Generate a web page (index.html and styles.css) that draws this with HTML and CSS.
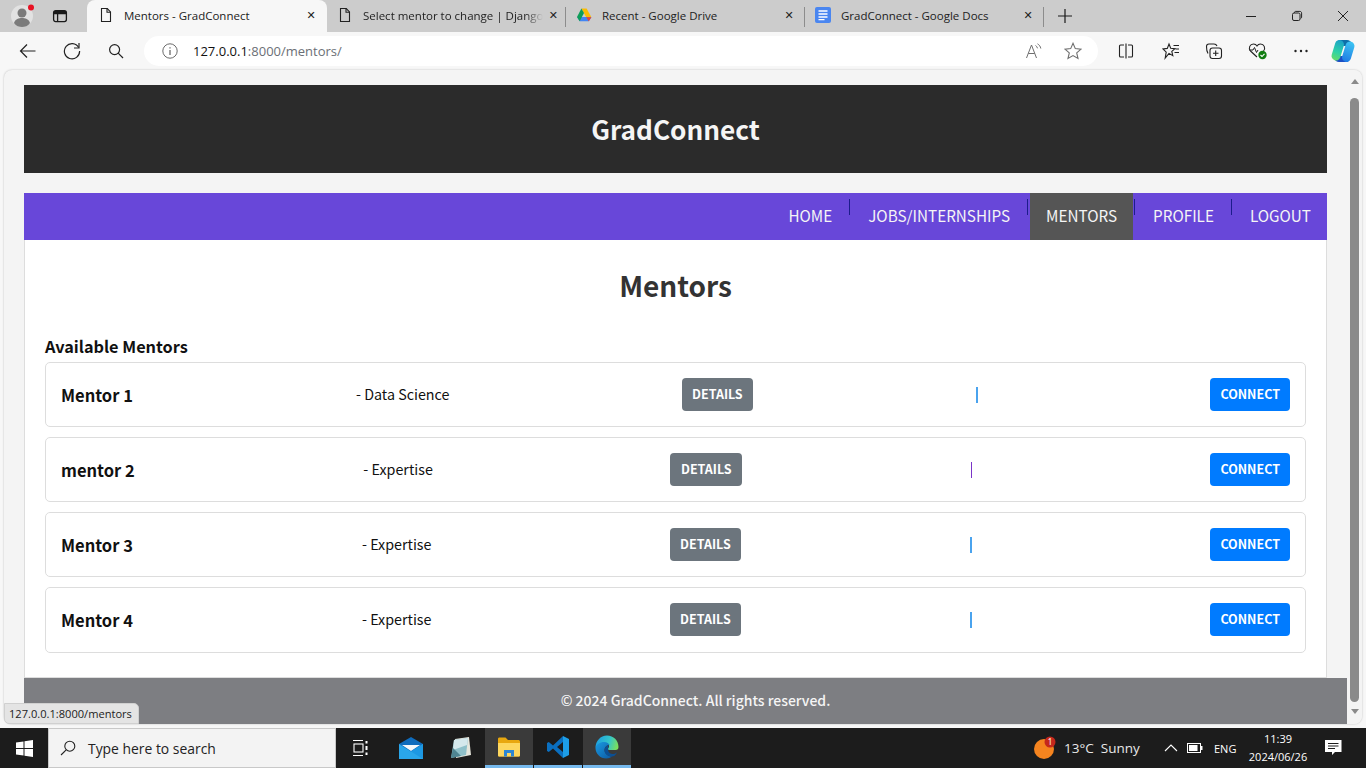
FILE: index.html
```html
<!DOCTYPE html>
<html lang="en">
  <head>
    <meta charset="UTF-8" />
    <title>Mentors - GradConnect</title>
    <link rel="stylesheet" href="styles.css">
  </head>
  <body>
    <div class="tabstrip">
      <div class="tab-tool profile-btn">
        <svg width="24" height="24" viewBox="0 0 24 24"><circle cx="11" cy="12" r="11" fill="#e2e2e2"/><circle cx="11" cy="9" r="4.5" fill="#7b7b7b"/><path d="M3 19c1-4 5-5 8-5s7 1 8 5c-2 3-5 4-8 4s-6-1-8-4z" fill="#7b7b7b"/><circle cx="20" cy="3.5" r="3" fill="#e81123"/></svg>
      </div>
      <div class="tab-tool sidebar-btn">
        <svg width="16" height="16" viewBox="0 0 16 16" fill="none" stroke="#1a1a1a" stroke-width="1.3"><rect x="1.6" y="2.6" width="12.8" height="11" rx="2"/><path d="M1.6 5.6h12.8M5.6 5.6v8" /><path d="M2 3h12v2.4H2z" fill="#1a1a1a" stroke="none"/></svg>
      </div>
      <div class="tab tab-active">
        <svg class="tab-icon" width="16" height="16" viewBox="0 0 16 16" fill="none" stroke="#222" stroke-width="1.1"><path d="M3.5 1.5h5.8l3.2 3.4v9.6h-9z"/><path d="M9 1.5v3.8h3.5"/></svg>
        <span class="tab-title">Mentors - GradConnect</span>
        <span class="tab-close">&#10005;</span>
      </div>
      <div class="tab">
        <svg class="tab-icon" width="16" height="16" viewBox="0 0 16 16" fill="none" stroke="#222" stroke-width="1.1"><path d="M3.5 1.5h5.8l3.2 3.4v9.6h-9z"/><path d="M9 1.5v3.8h3.5"/></svg>
        <span class="tab-title tab-fade">Select mentor to change | Django</span>
        <span class="tab-close">&#10005;</span>
      </div>
      <div class="tab">
        <svg class="tab-icon" width="16" height="16" viewBox="0 0 16 16"><path d="M5.4 1.5h5.200l4.800 8.700h-5.200z" fill="#fbbc04"/><path d="M3.700 14.200 1 10h14.400l-2.600 4.200z" fill="#4285f4"/><path d="M5.400 1.500 8 6 3.700 14.200 1 10z" fill="#0f9d58"/><path d="M10.200 10.200h5.200l-2.600 4z" fill="#ea4335"/></svg>
        <span class="tab-title">Recent - Google Drive</span>
        <span class="tab-close">&#10005;</span>
      </div>
      <div class="tab tab-last">
        <svg class="tab-icon" width="16" height="16" viewBox="0 0 16 16"><rect width="16" height="16" rx="2" fill="#4a86f0"/><path d="M3.500 4h9M3.500 7h9M3.500 10h9M3.500 12.600h6" stroke="#fff" stroke-width="1.400"/></svg>
        <span class="tab-title">GradConnect - Google Docs</span>
        <span class="tab-close">&#10005;</span>
      </div>
      <div class="new-tab">
        <svg width="16" height="16" viewBox="0 0 16 16" stroke="#1a1a1a" stroke-width="1.200"><path d="M8 1v14M1 8h14"/></svg>
      </div>
      <div class="window-btns">
        <svg width="12" height="12" viewBox="0 0 12 12" stroke="#222" fill="none"><path d="M1 6.500h10"/></svg>
        <svg width="12" height="12" viewBox="0 0 12 12" stroke="#222" fill="none"><rect x="1.500" y="3" width="7.500" height="7.500" rx="1.500"/><path d="M3.500 3V2.400c0-.6.500-1 1-1h4.400c1 0 1.700.7 1.700 1.700v4.200c0 .6-.4 1-1 1"/></svg>
        <svg width="12" height="12" viewBox="0 0 12 12" stroke="#222" fill="none"><path d="M1 1l10 10M11 1L1 11"/></svg>
      </div>
    </div>

    <div class="toolbar">
      <svg class="tool-back" width="18" height="18" viewBox="0 0 18 18" fill="none" stroke="#222" stroke-width="1.200"><path d="M16.500 9H1.500M8 2.500 1.500 9 8 15.500"/></svg>
      <svg class="tool-reload" width="18" height="18" viewBox="0 0 18 18" fill="none" stroke="#222" stroke-width="1.200"><path d="M15.600 5.500A7.600 7.600 0 1 0 16.600 9"/><path d="M16 1v5h-5"/></svg>
      <svg class="tool-search" width="16" height="16" viewBox="0 0 16 16" fill="none" stroke="#222" stroke-width="1.200"><circle cx="6.600" cy="6.600" r="5"/><path d="M10.200 10.200 15 15"/></svg>
      <div class="addressbar">
        <svg width="16" height="16" viewBox="0 0 16 16" fill="none" stroke="#6b6b6b"><circle cx="8" cy="8" r="7.200"/><path d="M8 7v5M8 4.200v1.400" stroke-width="1.300"/></svg>
        <span class="url"><span class="url-host">127.0.0.1</span>:8000/mentors/</span>
        <svg class="read-aloud" width="16" height="16" viewBox="0 0 16 16" fill="none" stroke="#6f6f6f" stroke-width="1"><path d="M.5 15 5.500 2 10.500 15M2.300 10.500h6.400"/><path d="M9.500 2.500c1 .6 1.700 1.500 2 2.800M11.500.8c1.700 1 3 2.700 3.300 4.700"/></svg>
        <svg class="fav-star" width="18" height="18" viewBox="0 0 18 18" fill="none" stroke="#6f6f6f" stroke-width="1.100"><path d="M9 1.300 11.300 6.600l5.700.5-4.300 3.800 1.300 5.600L9 13.600l-5 2.900 1.300-5.600L1 7.100l5.700-.5z"/></svg>
      </div>
      <div class="toolbar-icons">
        <svg width="16" height="16" viewBox="0 0 16 16" fill="none" stroke="#222" stroke-width="1.100"><path d="M6 2H2.500c-.6 0-1 .4-1 1v10c0 .6.400 1 1 1H6M10 2h3.500c.6 0 1 .4 1 1v10c0 .6-.4 1-1 1H10M8 .5v15"/></svg>
        <svg width="18" height="18" viewBox="0 0 18 18" fill="none" stroke="#222" stroke-width="1.100"><path d="M7 2 8.700 6.200l4.300.4-3.200 2.800 1 4.300L7 11.400 3.200 16l1-5.900L1 7l4.300-.6z"/><path d="M11.500 3.500H17M13.500 7H17M12.500 10.500H17"/></svg>
        <svg width="18" height="18" viewBox="0 0 18 18" fill="none" stroke="#222" stroke-width="1.100"><path d="M3 11.500C2 10 1.500 7 1.500 4.500 1.500 3 2.500 2 4 2h5c1.500 0 2.500.8 3 2"/><rect x="5" y="6" width="11.500" height="10.500" rx="2.500"/><path d="M10.700 8.500v5.500M8 11.200h5.500"/></svg>
        <svg width="20" height="18" viewBox="0 0 20 18"><path d="M9 15 2.500 9C0 6 2 2 5.500 2 7 2 8.300 2.800 9 4c.7-1.200 2-2 3.500-2C16 2 18 6 15.500 9" fill="none" stroke="#222" stroke-width="1.100"/><path d="M1 8h4l1.500-2.500 2 5L10 8" fill="none" stroke="#222"/><circle cx="14.500" cy="13" r="4.200" fill="#107c10"/><path d="M12.500 13l1.500 1.500 2.500-2.700" stroke="#fff" fill="none" stroke-width="1.100"/></svg>
        <svg width="16" height="16" viewBox="0 0 16 16" fill="#222"><circle cx="2.500" cy="8" r="1.200"/><circle cx="8" cy="8" r="1.200"/><circle cx="13.500" cy="8" r="1.200"/></svg>
        <svg class="copilot" width="26" height="26" viewBox="0 0 26 26">
          <defs>
            <linearGradient id="copilotA" gradientUnits="userSpaceOnUse" x1="11" y1="2" x2="4" y2="22"><stop offset="0" stop-color="#1a9fc9"/><stop offset="0.600" stop-color="#2ed2a6"/><stop offset="1" stop-color="#66dc6a"/></linearGradient>
            <linearGradient id="copilotB" gradientUnits="userSpaceOnUse" x1="22" y1="5" x2="14" y2="24"><stop offset="0" stop-color="#3cc2f2"/><stop offset="1" stop-color="#1e78e4"/></linearGradient>
          </defs>
          <path d="M8 2h9c2.500 0 4 1.500 4.500 3.500L22 8H13z" fill="#0f6fa8"/>
          <path d="M18 24H9c-2.500 0-4-1.500-4.500-3.500L4 18h9z" fill="#1b4fc4"/>
          <path d="M9.500 6.500 6 18" stroke="url(#copilotA)" stroke-width="9" stroke-linecap="round" fill="none"/>
          <path d="M20 8 16.500 19.500" stroke="url(#copilotB)" stroke-width="9" stroke-linecap="round" fill="none"/>
        </svg>
      </div>
    </div>

    <div class="viewport-wrap">
      <div class="viewport">
        <div class="page">
          <header class="site-header">
            <h1>GradConnect</h1>
          </header>
          <nav class="site-nav">
            <a href="#" class="nav-link">HOME</a>
            <span class="nav-sep"></span>
            <a href="#" class="nav-link">JOBS/INTERNSHIPS</a>
            <span class="nav-sep"></span>
            <a href="#" class="nav-link active">MENTORS</a>
            <span class="nav-sep"></span>
            <a href="#" class="nav-link">PROFILE</a>
            <span class="nav-sep"></span>
            <a href="#" class="nav-link">LOGOUT</a>
          </nav>
          <main class="content">
            <h2>Mentors</h2>
            <h3>Available Mentors</h3>
            <div class="mentor-row">
              <strong class="mentor-name">Mentor 1</strong>
              <span class="mentor-field">- Data Science</span>
              <a href="#" class="btn btn-details">DETAILS</a>
              <span class="mentor-sep sep-fresh"></span>
              <a href="#" class="btn btn-connect">CONNECT</a>
            </div>
            <div class="mentor-row">
              <strong class="mentor-name">mentor 2</strong>
              <span class="mentor-field">- Expertise</span>
              <a href="#" class="btn btn-details">DETAILS</a>
              <span class="mentor-sep sep-visited"></span>
              <a href="#" class="btn btn-connect">CONNECT</a>
            </div>
            <div class="mentor-row">
              <strong class="mentor-name">Mentor 3</strong>
              <span class="mentor-field">- Expertise</span>
              <a href="#" class="btn btn-details">DETAILS</a>
              <span class="mentor-sep sep-fresh"></span>
              <a href="#" class="btn btn-connect">CONNECT</a>
            </div>
            <div class="mentor-row">
              <strong class="mentor-name">Mentor 4</strong>
              <span class="mentor-field">- Expertise</span>
              <a href="#" class="btn btn-details">DETAILS</a>
              <span class="mentor-sep sep-fresh"></span>
              <a href="#" class="btn btn-connect">CONNECT</a>
            </div>
          </main>
          <footer class="site-footer">&copy; 2024 GradConnect. All rights reserved.</footer>
        </div>
        <div class="scrollbar">
          <span class="scroll-up"></span>
          <span class="scroll-thumb"></span>
          <span class="scroll-down"></span>
        </div>
      </div>
      <div class="status-tip">127.0.0.1:8000/mentors</div>
    </div>

    <div class="taskbar">
      <div class="start-btn">
        <svg width="17" height="17" viewBox="0 0 17 17" fill="#fff"><path d="M0 2.500 7.500 1.400v6.500H0zM8.500 1.300 17 0v7.900H8.500zM0 9h7.500v6.500L0 14.500zM8.500 9H17v8l-8.500-1.200z"/></svg>
      </div>
      <div class="task-search">
        <svg width="16" height="16" viewBox="0 0 16 16" fill="none" stroke="#222" stroke-width="1.100"><circle cx="9.800" cy="6.200" r="5"/><path d="M6.200 9.800 1 15"/></svg>
        <span>Type here to search</span>
      </div>
      <div class="task-icon task-view">
        <svg width="18" height="18" viewBox="0 0 18 18" fill="none" stroke="#fff" stroke-width="1.100"><path d="M1 1.500h10M1 16.500h10"/><rect x="2" y="5" width="9" height="8"/><path d="M14.500 2v2.500M14.500 7v4M14.500 13.500V16" stroke-width="2"/></svg>
      </div>
      <div class="task-icon">
        <svg width="24" height="22" viewBox="0 0 24 22"><path d="M0 7 12 0l12 7v15H0z" fill="#0f6cbd"/><path d="M3 8h18l-9 6z" fill="#f4f8fb"/><path d="M0 7l12 7.500L24 7v15H0z" fill="#2aa6ea"/><path d="M12 14.500 24 7v15z" fill="#1590de" opacity="0.600"/></svg>
      </div>
      <div class="task-icon">
        <svg width="22" height="22" viewBox="0 0 22 22"><path d="M6 2 20 0l2 18-15 3z" fill="#e6e6dc"/><path d="M5 3 19 1l-2 17-15 3z" fill="#8fc0c9"/><path d="M5 3 19 1l-1 7L4 13z" fill="#d5e8ec"/><path d="M2 21 4 11l8 8z" fill="#4f8592"/></svg>
      </div>
      <div class="task-icon task-open task-hover">
        <svg width="22" height="20" viewBox="0 0 22 20"><path d="M0 2c0-1 .6-1.500 1.500-1.500h6L10 3h10.500c.8 0 1.500.6 1.500 1.500V18c0 1-.7 1.500-1.500 1.500h-19C.6 19.500 0 19 0 18z" fill="#e8a70f"/><path d="M0 6h22v12c0 1-.7 1.500-1.500 1.500h-19C.6 19.500 0 19 0 18z" fill="#fdd75f"/><path d="M6 19.500V13h10v6.500h-3V16H9v3.500z" fill="#2c86d4"/></svg>
      </div>
      <div class="task-icon task-open">
        <svg width="24" height="24" viewBox="0 0 24 24"><path d="M17 1 7 10.500 2.800 7 1 8v8l1.800 1L7 13.500 17 23v-6l-6-5 6-5z" fill="#0a6fc0"/><path d="M17 1l6 3v16l-6 3z" fill="#1d9ee8"/></svg>
      </div>
      <div class="task-icon task-open task-hover">
        <svg width="24" height="24" viewBox="0 0 24 24">
          <defs>
            <linearGradient id="edgeA" x1="0" y1="0.300" x2="1" y2="0.500"><stop offset="0" stop-color="#1b9de2"/><stop offset="0.600" stop-color="#35c6c8"/><stop offset="1" stop-color="#7be05c"/></linearGradient>
            <linearGradient id="edgeB" x1="0" y1="0" x2="1" y2="1"><stop offset="0" stop-color="#1a9ae0"/><stop offset="1" stop-color="#0c59a4"/></linearGradient>
          </defs>
          <path d="M12 .5C18.500.5 23.500 5.500 23.500 12c0 2-1 3-3 3h-6c-1.500 0-2-1-1-2 1.500-2 0-5-3-5C5 8 1 11 .5 13 .5 6 5.500.5 12 .5z" fill="url(#edgeA)"/>
          <path d="M.5 13C1 9.500 5 7 9 7c3 0 5 1.500 5.500 3-2.500 0-5 2-5 5 0 4 4 6.500 7.500 6.500-1.500 1.300-3.500 2-5.500 2C5 23.500.5 18.500.5 13z" fill="url(#edgeB)"/>
          <path d="M13 14.500c0 2.500 2 4.500 5 4.500 1.500 0 3-.5 4-2-1 3-3 4.500-5 4.500-4 0-7.500-2.500-7.500-6.500 0-2.500 2-4.500 4-5-.5 1.300-.5 3-.5 4.500z" fill="#0b4f95"/>
        </svg>
      </div>
      <div class="tray">
        <svg class="weather-icon" width="24" height="24" viewBox="0 0 24 24"><circle cx="10" cy="13" r="10" fill="#f5841f"/><circle cx="16" cy="6" r="5.500" fill="#c4281c"/><text x="16" y="9" font-size="8" fill="#fff" text-anchor="middle" font-family="Noto Sans">1</text></svg>
        <span class="weather-text">13°C&nbsp;&nbsp;Sunny</span>
        <svg class="tray-chevron" width="14" height="10" viewBox="0 0 14 10" fill="none" stroke="#fff" stroke-width="1.100"><path d="M1 8l6-6 6 6"/></svg>
        <svg class="tray-battery" width="16" height="10" viewBox="0 0 16 10"><rect x=".5" y=".5" width="13" height="9" fill="none" stroke="#fff"/><rect x="2" y="2" width="8.500" height="6" fill="#fff"/><rect x="14" y="3" width="1.500" height="4" fill="#fff"/></svg>
        <span class="tray-lang">ENG</span>
        <div class="tray-clock">
          <span>11:39</span>
          <span>2024/06/26</span>
        </div>
        <svg class="tray-notify" width="17" height="16" viewBox="0 0 17 16"><path d="M0 0h16.500v12H10l-3 3v-3H0z" fill="#fff"/><path d="M3 3.500h10.500M3 6h10.500M3 8.500h7" stroke="#1e1e1e"/></svg>
      </div>
    </div>
  </body>
</html>
```

FILE: styles.css
```css
* {
  box-sizing: border-box;
}
html,
body {
  margin: 0;
  height: 768px;
  overflow: hidden;
}
body {
  display: flex;
  flex-direction: column;
  width: 1366px;
  font-family: "Open Sans", "Noto Sans", sans-serif;
  background-color: #f7f7f7;
}

/* browser tabs */
.tabstrip {
  display: flex;
  align-items: flex-end;
  height: 32px;
  background-color: #cccccc;
}
.tab-tool {
  display: flex;
  justify-content: center;
  align-items: center;
  height: 32px;
}
.profile-btn {
  width: 44px;
  padding-left: 2px;
}
.sidebar-btn {
  width: 32px;
  margin-right: 11px;
}
.tab {
  display: flex;
  align-items: center;
  width: 239px;
  height: 32px;
  padding: 0 10px 2px 10px;
  font-size: 11.5px;
  color: #222;
  position: relative;
}
.tab:not(.tab-active)::after {
  content: "";
  position: absolute;
  right: 0;
  top: 7px;
  height: 20px;
  width: 1px;
  background-color: #8c8c8c;
}
.tab-active {
  width: 240px;
  padding-left: 11px;
  background-color: #f7f7f7;
  border-radius: 8px 8px 0 0;
}
.tab-icon {
  flex: none;
  margin-right: 10px;
}
.tab-title {
  flex: 1;
  white-space: nowrap;
}
.tab-fade {
  -webkit-mask-image: linear-gradient(to right, #000 90%, transparent 100%);
  mask-image: linear-gradient(to right, #000 90%, transparent 100%);
}
.tab-close {
  flex: none;
  width: 12px;
  margin-left: 4px;
  font-size: 11px;
  text-align: center;
  font-family: "DejaVu Sans", sans-serif;
}
.new-tab {
  display: flex;
  justify-content: center;
  align-items: center;
  width: 42px;
  height: 32px;
}
.window-btns {
  display: flex;
  align-items: center;
  justify-content: flex-end;
  gap: 34px;
  flex: 1;
  height: 32px;
  padding-right: 17px;
}

/* browser toolbar */
.toolbar {
  display: flex;
  align-items: center;
  height: 38px;
  padding-left: 19px;
  background-color: #f7f7f7;
}
.tool-back {
  margin-right: 26px;
}
.tool-reload {
  margin-right: 27px;
}
.tool-search {
  margin-right: 20px;
}
.addressbar {
  display: flex;
  align-items: center;
  width: 954px;
  height: 30px;
  padding: 0 16px 0 18px;
  background-color: #fff;
  border-radius: 15px;
}
.url {
  flex: 1;
  margin-left: 15px;
  font-size: 13px;
  color: #6b6f76;
}
.url-host {
  color: #111;
}
.read-aloud {
  margin-right: 22px;
}
.toolbar-icons {
  display: flex;
  align-items: center;
  flex: 1;
  gap: 26px;
  padding-left: 20px;
}
.toolbar-icons svg:nth-child(2) {
  margin-left: 2px;
}
.toolbar-icons svg:nth-child(3),
.toolbar-icons svg:nth-child(4),
.toolbar-icons svg:nth-child(5) {
  margin-left: -1px;
}
.toolbar-icons svg:nth-child(6) {
  margin-left: -5px;
}

/* page area */
.viewport-wrap {
  flex: 1;
  position: relative;
  min-height: 0;
  padding: 0 4px 4px 4px;
}
.viewport {
  display: flex;
  height: 100%;
  overflow: hidden;
  border-radius: 8px;
  background-color: #f4f4f4;
  box-shadow: 0 0 2px rgba(0, 0, 0, 0.25);
}
.page {
  width: 1343px;
  height: 654px;
  padding: 15px 20px 0;
  overflow: hidden;
  font-family: "Noto Sans CJK SC", "Noto Sans", sans-serif;
}
.site-header {
  height: 88px;
  background-color: #2b2b2b;
  color: #f5f5f5;
  text-align: center;
}
.site-header h1 {
  margin: 0;
  font-size: 26.2px;
  font-weight: 700;
  line-height: 88px;
}
.site-nav {
  display: flex;
  justify-content: flex-end;
  height: 47px;
  margin-top: 20px;
  background-color: #6847d9;
}
.nav-link {
  padding: 0 16px;
  line-height: 45px;
  font-size: 15.25px;
  color: #f5f5f5;
  text-decoration: none;
}
.nav-link.active {
  background-color: #555555;
}
.nav-sep {
  width: 1px;
  height: 16px;
  margin: 6px 2px 0 1px;
  background-color: #1c1c8c;
}
.content {
  height: 438px;
  padding: 0 20px;
  background-color: #fff;
  border: 1px solid #dddddd;
  border-top: none;
}
.content h2 {
  margin: 0;
  padding-top: 22px;
  font-size: 28px;
  font-weight: 700;
  line-height: 46px;
  color: #333;
  text-align: center;
}
.content h3 {
  margin: 0 0 2px;
  padding-top: 24px;
  font-size: 16.3px;
  font-weight: 700;
  line-height: 28px;
  color: #111;
}
.mentor-row {
  display: flex;
  justify-content: space-between;
  align-items: center;
  height: 65px;
  margin-bottom: 10px;
  padding: 0 15px;
  border: 1px solid #dddddd;
  border-radius: 5px;
}
.mentor-row:last-child {
  height: 66px;
  padding-bottom: 1px;
}
.mentor-name {
  font-size: 16.5px;
  font-weight: 700;
  color: #111;
}
.mentor-field {
  margin-top: -2px;
  font-size: 14.3px;
  color: #111;
}
.btn {
  margin-left: 9px;
  height: 33px;
  padding: 0 10.5px;
  font-size: 12.5px;
  font-weight: 700;
  line-height: 31px;
  color: #fff;
  text-decoration: none;
  border-radius: 4px;
}
.btn-details {
  background-color: #6c757d;
}
.btn-connect {
  background-color: #007bff;
  padding: 0 10px;
}
.mentor-sep {
  flex: none;
  width: 2px;
  height: 16px;
}
.sep-fresh {
  background-color: #4aa3ee;
}
.sep-visited {
  background-color: #7a35c8;
  width: 1px;
  margin-right: 1px;
}
.site-footer {
  width: 1323px;
  height: 46px;
  padding-left: 20px;
  background-color: #7d7e82;
  color: #f5f5f5;
  font-size: 14px;
  font-weight: 500;
  line-height: 44px;
  text-align: center;
}
.scrollbar {
  display: flex;
  flex-direction: column;
  align-items: center;
  flex: 1;
  padding-top: 9px;
  background-color: #f4f4f4;
}
.scroll-up {
  width: 0;
  height: 0;
  border-left: 4px solid transparent;
  border-right: 4px solid transparent;
  border-bottom: 5px solid #8a8a8a;
}
.scroll-thumb {
  width: 9px;
  height: 604px;
  margin-top: 14px;
  background-color: #8a8a8a;
  border-radius: 5px;
}
.scroll-down {
  width: 0;
  height: 0;
  margin-top: 7px;
  border-left: 4px solid transparent;
  border-right: 4px solid transparent;
  border-top: 5px solid #8a8a8a;
}
.status-tip {
  position: absolute;
  left: 4px;
  bottom: 4px;
  height: 21px;
  padding: 0 6px 0 4px;
  font-size: 11.1px;
  line-height: 19px;
  color: #222;
  background-color: #e4e4e4;
  border: 1px solid #d0d0d0;
  border-radius: 0 5px 0 5px;
}

/* windows taskbar */
.taskbar {
  display: flex;
  align-items: stretch;
  height: 40px;
  background-color: #1c1c1c;
  color: #fff;
  font-size: 13px;
}
.start-btn {
  display: flex;
  justify-content: center;
  align-items: center;
  width: 48px;
}
.task-search {
  display: flex;
  align-items: center;
  gap: 12px;
  width: 288px;
  padding-left: 11px;
  background-color: #f3f3f3;
  border: 1px solid #c8c8c8;
  color: #222;
  font-size: 13.9px;
}
.task-icon {
  display: flex;
  justify-content: center;
  align-items: center;
  width: 49px;
}
.task-view {
  width: 50px;
}
.task-open {
  width: 48px;
  margin-left: 1px;
  border-bottom: 3px solid #76b9ed;
}
.task-hover {
  background-color: #3a3a3a;
}
.tray {
  display: flex;
  align-items: center;
  flex: 1;
  padding-left: 403px;
}
.weather-icon {
  margin-right: 6px;
}
.weather-text {
  width: 100px;
  font-size: 13.5px;
  color: #e8e8e8;
}
.tray-chevron {
  margin-right: 9px;
}
.tray-battery {
  margin-right: 11px;
}
.tray-lang {
  width: 35px;
  font-size: 11px;
}
.tray-clock {
  display: flex;
  flex-direction: column;
  align-items: center;
  width: 58px;
  font-size: 11px;
  line-height: 18px;
}
.tray-notify {
  margin-left: 18px;
}
```
